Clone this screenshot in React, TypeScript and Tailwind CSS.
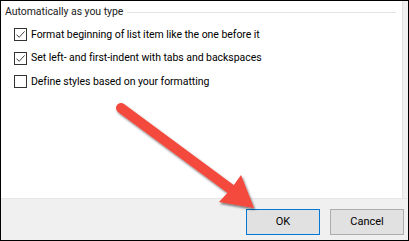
const FONT = "font-['Roboto',sans-serif]";

type RowProps = {
  label: string;
  checked: boolean;
};

function CheckRow({ label, checked }: RowProps) {
  return (
    <div className="flex h-[23.5px] items-center gap-[4px]">
      <span className="flex h-[13px] w-[13px] items-center justify-center border border-[#333333] bg-white">
        {checked && (
          <svg width="11" height="11" viewBox="0 0 11 11" fill="none">
            <path d="M1.5 5.6 L4.2 8.3 L9.6 2.4" stroke="#444444" strokeWidth="1" />
          </svg>
        )}
      </span>
      <span className="text-[10.5px] leading-none tracking-[-0.05px] text-black">{label}</span>
    </div>
  );
}

function Arrow() {
  return (
    <svg
      className="pointer-events-none absolute left-0 top-0"
      width="409"
      height="241"
      viewBox="0 0 409 241"
    >
      <defs>
        <filter id="shadow" x="-20%" y="-20%" width="140%" height="140%">
          <feDropShadow dx="1.2" dy="1.8" stdDeviation="1" floodColor="#000" floodOpacity="0.55" />
        </filter>
      </defs>
      <g filter="url(#shadow)" fill="#f4483c">
        <line x1="120" y1="107" x2="231" y2="189" stroke="#f4483c" strokeWidth="10" strokeLinecap="round" />
        <polygon points="240,174 253,207 218,201 230,188" />
      </g>
    </svg>
  );
}

export default function App() {
  return (
    <div className={`relative h-[241px] w-[409px] overflow-hidden border border-black bg-white ${FONT}`}>
      <div className="flex h-[197px]">
        <div className="flex-1 border-r border-[#e2e2e2] bg-white pl-[4px] pt-[4px]">
          <div className="flex items-center gap-[4px] pr-[6px]">
            <span className="text-[10.5px] leading-[14px] tracking-[-0.05px] text-[#1a1a1a]">
              Automatically as you type
            </span>
            <div className="h-px flex-1 bg-[#e3e3e3]" />
          </div>
          <div className="mt-[4px] pl-[9px]">
            <CheckRow checked label="Format beginning of list item like the one before it" />
            <CheckRow checked label="Set left- and first-indent with tabs and backspaces" />
            <CheckRow checked={false} label="Define styles based on your formatting" />
          </div>
        </div>
        <div className="w-[5px] bg-[#f0f0f0]" />
      </div>
      <div className="flex h-[42px] justify-end gap-[10px] border-t border-[#e6e6e6] bg-[#f0f0f0] pr-[4px] pt-[10px]">
        <button
          type="button"
          className="h-[26px] w-[74px] border border-[#0078d7] bg-[#e1e1e1] text-[11px] text-black"
        >
          OK
        </button>
        <button
          type="button"
          className="h-[26px] w-[74px] border border-[#adadad] bg-[#e1e1e1] text-[11px] text-black"
        >
          Cancel
        </button>
      </div>
      <Arrow />
    </div>
  );
}
